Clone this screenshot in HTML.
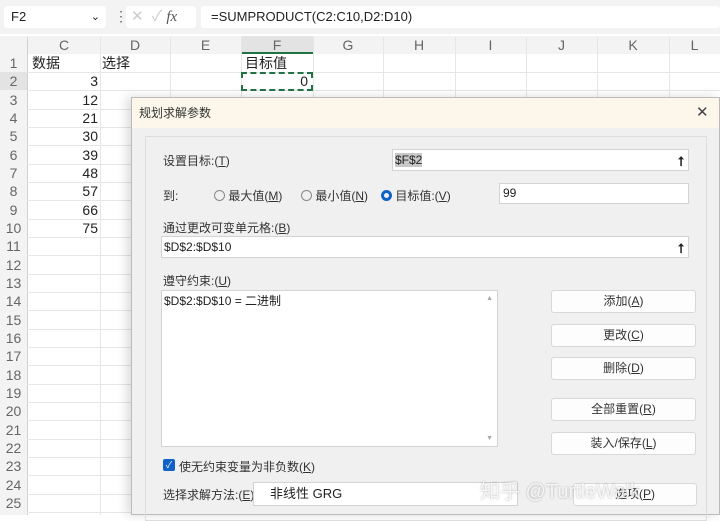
<!DOCTYPE html>
<html><head><meta charset="utf-8"><style>
*{box-sizing:border-box;margin:0;padding:0}
body{width:720px;height:515px;overflow:hidden;background:#fff;position:relative;font-family:"Liberation Sans","Noto Sans CJK SC",sans-serif;font-size:13px;color:#222}
.a{position:absolute}
.hl{position:absolute;left:27px;right:0;height:1px;background:#e6e6e6}
.vl{position:absolute;top:37px;bottom:0;width:1px;background:#e6e6e6}
.ch{position:absolute;top:37px;height:17px;text-align:center;color:#666;font-size:14px;line-height:17px}
.rn{position:absolute;left:0;width:27px;text-align:center;color:#666;font-size:14px;line-height:18px}
.num{position:absolute;left:28px;width:70px;text-align:right;font-size:14px;line-height:18px}
.dl{font-size:12px;color:#333}
.inp{position:absolute;background:#fff;border:1px solid #d3d3d3}
.btn{position:absolute;left:551px;width:145px;height:23px;background:#fdfdfd;border:1px solid #d8d8d8;border-radius:3px;text-align:center;line-height:21px;font-size:12px;color:#333}
u{text-decoration:underline}
.up{position:absolute;right:4px;top:2px;font-size:13px;font-weight:bold}
</style></head><body>
<div class="a" style="left:0;top:0;width:720px;height:34px;background:#f3f3f3"></div>
<div class="a" style="left:4px;top:6px;width:102px;height:22px;background:#fff;border-radius:3px;font-size:13px;line-height:22px;padding-left:7px">F2<span style="position:absolute;right:6px;font-size:11px">&#8964;</span></div>
<div class="a" style="left:114px;top:8px;color:#666;font-size:14px">&#8942;</div>
<div class="a" style="left:126px;top:6px;width:70px;height:22px;background:#fff;border-radius:3px;color:#ccc;font-size:15px;line-height:22px;padding-left:5px">✕ &nbsp;✓ <i style="color:#555;font-family:'Liberation Serif',serif">fx</i></div>
<div class="a" style="left:201px;top:6px;width:519px;height:22px;background:#fff;border-radius:3px;font-size:13px;line-height:22px;padding-left:10px">=SUMPRODUCT(C2:C10,D2:D10)</div>
<div class="a" style="left:0;top:36px;width:720px;height:18px;background:#f3f3f3"></div>
<div class="a" style="left:0;top:36px;width:27px;height:479px;background:#f3f3f3"></div>
<div class="a" style="left:241px;top:36px;width:72px;height:18px;background:#e3e3e3;border-bottom:2px solid #217346"></div>
<div class="a" style="left:0;top:72px;width:27px;height:18px;background:#e3e3e3"></div>
<div class="ch" style="left:28px;width:72px">C</div><div class="ch" style="left:100px;width:70px">D</div><div class="ch" style="left:170px;width:71px">E</div><div class="ch" style="left:241px;width:72px">F</div><div class="ch" style="left:313px;width:70px">G</div><div class="ch" style="left:383px;width:72px">H</div><div class="ch" style="left:455px;width:71px">I</div><div class="ch" style="left:526px;width:71px">J</div><div class="ch" style="left:597px;width:72px">K</div><div class="ch" style="left:669px;width:51px">L</div>
<div class="vl" style="left:27px;background:#d0d0d0"></div><div class="vl" style="left:100px"></div><div class="vl" style="left:170px"></div><div class="vl" style="left:241px"></div><div class="vl" style="left:313px"></div><div class="vl" style="left:383px"></div><div class="vl" style="left:455px"></div><div class="vl" style="left:526px"></div><div class="vl" style="left:597px"></div><div class="vl" style="left:669px"></div>
<div id="rows"></div>
<script>
var h='';for(var i=1;i<=25;i++){var t=54+(i-1)*18.33;h+='<div class="rn" style="top:'+t+'px">'+i+'</div><div class="hl" style="top:'+(t+18)+'px"></div>';}
var v=[3,12,21,30,39,48,57,66,75];for(var j=0;j<9;j++){h+='<div class="num" style="top:'+(54+(j+1)*18.33)+'px">'+v[j]+'</div>';}
document.getElementById('rows').innerHTML=h;
</script>
<div class="a" style="left:32px;top:54px;font-size:14px;line-height:18px">数据</div>
<div class="a" style="left:102px;top:54px;font-size:14px;line-height:18px">选择</div>
<div class="a" style="left:245px;top:54px;font-size:14px;line-height:18px">目标值</div>
<div class="a" style="left:241px;top:72px;width:72px;height:19px;border:2px dashed #217346;text-align:right;font-size:14px;line-height:15px;padding-right:3px">0</div>
<div class="a" style="left:131px;top:97px;width:589px;height:418px;background:#f0f0f0;border:1px solid #bbb;box-shadow:-4px 0 10px rgba(0,0,0,.15)"></div>
<div class="a" style="left:132px;top:98px;width:587px;height:30px;background:#fcf7ea"></div>
<div class="a dl" style="left:139px;top:104px;font-size:12px">规划求解参数</div>
<div class="a" style="left:696px;top:103px;font-size:15px;color:#444">✕</div>
<div class="a" style="left:145px;top:136px;width:562px;height:385px;border:1px solid #ddd"></div>
<div class="a dl" style="left:163px;top:152px">设置目标:(<u>T</u>)</div>
<div class="inp" style="left:392px;top:149px;width:297px;height:22px;font-size:12px;line-height:20px;padding-left:2px"><span style="background:#c8c8c8">$F$2</span><span class="up">⭡</span></div>
<div class="a dl" style="left:163px;top:187px">到:</div>
<div class="a dl" style="left:214px;top:187px"><span style="display:inline-block;width:11px;height:11px;border:1px solid #888;border-radius:50%;vertical-align:-1px"></span> 最大值(<u>M</u>)</div>
<div class="a dl" style="left:301px;top:187px"><span style="display:inline-block;width:11px;height:11px;border:1px solid #888;border-radius:50%;vertical-align:-1px"></span> 最小值(<u>N</u>)</div>
<div class="a dl" style="left:381px;top:187px"><span style="display:inline-block;width:11px;height:11px;border:3px solid #1062c9;border-radius:50%;vertical-align:-1px"></span> 目标值:(<u>V</u>)</div>
<div class="inp" style="left:499px;top:183px;width:190px;height:21px;font-size:12px;line-height:19px;padding-left:3px">99</div>
<div class="a dl" style="left:163px;top:219px">通过更改可变单元格:(<u>B</u>)</div>
<div class="inp" style="left:161px;top:236px;width:528px;height:22px;font-size:12px;line-height:20px;padding-left:2px">$D$2:$D$10<span class="up">⭡</span></div>
<div class="a dl" style="left:163px;top:272px">遵守约束:(<u>U</u>)</div>
<div class="inp" style="left:161px;top:290px;width:337px;height:157px;font-size:12px;padding:1px 2px">$D$2:$D$10 = 二进制<span style="position:absolute;right:4px;top:4px;font-size:7px;color:#aaa">▲</span><span style="position:absolute;right:4px;bottom:4px;font-size:7px;color:#aaa">▼</span></div>
<div class="btn" style="top:290px">添加(<u>A</u>)</div>
<div class="btn" style="top:324px">更改(<u>C</u>)</div>
<div class="btn" style="top:357px">删除(<u>D</u>)</div>
<div class="btn" style="top:398px">全部重置(<u>R</u>)</div>
<div class="btn" style="top:432px">装入/保存(<u>L</u>)</div>
<div class="a" style="left:163px;top:459px;width:12px;height:12px;background:#1062c9;border-radius:2px;color:#fff;font-size:9px;line-height:12px;text-align:center">✓</div>
<div class="a dl" style="left:179px;top:458px">使无约束变量为非负数(<u>K</u>)</div>
<div class="a dl" style="left:163px;top:486px">选择求解方法:(<u>E</u>)</div>
<div class="inp" style="left:253px;top:482px;width:265px;height:24px;font-size:13px;line-height:22px;padding-left:16px">非线性 GRG</div>
<div class="btn" style="left:573px;top:483px;width:124px">选项(<u>P</u>)</div>
<div class="a" style="left:480px;top:475px;font-size:20px;color:rgba(255,255,255,.8);text-shadow:0 0 2px rgba(0,0,0,.3)">知乎 @TurtleWalk</div>
</body></html>
